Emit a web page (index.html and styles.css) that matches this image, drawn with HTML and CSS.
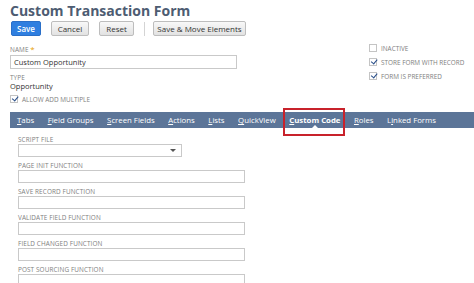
FILE: index.html
```html
<!DOCTYPE html>
<html>
<head>
<meta charset="utf-8">
<link rel="stylesheet" href="styles.css">
</head>
<body>
<div class="page">
  <h1 class="title">Custom Transaction Form</h1>
  <div class="toolbar">
    <button class="btn primary">Save</button>
    <button class="btn">Cancel</button>
    <button class="btn">Reset</button>
    <span class="sep"></span>
    <button class="btn">Save &amp; Move Elements</button>
  </div>
  <div class="top">
    <div class="left">
      <div class="label">NAME <span class="req">*</span></div>
      <div class="input wide">Custom Opportunity</div>
      <div class="label type">TYPE</div>
      <div class="value">Opportunity</div>
      <div class="check-row"><span class="cb checked"></span><span class="cl">ALLOW ADD MULTIPLE</span></div>
    </div>
    <div class="right">
      <div class="check-row"><span class="cb"></span><span class="cl">INACTIVE</span></div>
      <div class="check-row"><span class="cb checked"></span><span class="cl">STORE FORM WITH RECORD</span></div>
      <div class="check-row"><span class="cb checked"></span><span class="cl">FORM IS PREFERRED</span></div>
    </div>
  </div>
  <div class="tabs">
    <span class="tab"><u>T</u>abs</span>
    <span class="tab"><u>F</u>ield Groups</span>
    <span class="tab"><u>S</u>creen Fields</span>
    <span class="tab"><u>A</u>ctions</span>
    <span class="tab"><u>L</u>ists</span>
    <span class="tab"><u>Q</u>uickView</span>
    <span class="tab active"><u>C</u>ustom Code</span>
    <span class="tab"><u>R</u>oles</span>
    <span class="tab">L<u>i</u>nked Forms</span>
  </div>
  <div class="content">
    <div class="label">SCRIPT FILE</div>
    <div class="input select"><span class="arrow"></span></div>
    <div class="label">PAGE INIT FUNCTION</div>
    <div class="input field"></div>
    <div class="label">SAVE RECORD FUNCTION</div>
    <div class="input field"></div>
    <div class="label">VALIDATE FIELD FUNCTION</div>
    <div class="input field"></div>
    <div class="label">FIELD CHANGED FUNCTION</div>
    <div class="input field"></div>
    <div class="label">POST SOURCING FUNCTION</div>
    <div class="input field"></div>
  </div>
</div>
</body>
</html>
```
FILE: styles.css
```css
html, body {
  margin: 0;
  padding: 0;
  background: #fff;
  overflow: hidden;
}
body {
  font-family: "Open Sans", "Liberation Sans", sans-serif;
  color: #333;
  width: 474px;
  height: 283px;
}
.page {
  padding: 2px 0 0 10px;
}
.title {
  margin: 0;
  font-size: 14px;
  font-weight: 700;
  color: #4d5c72;
  line-height: 17px;
  height: 18px;
}
.toolbar {
  display: flex;
  align-items: center;
  margin-top: 1px;
  margin-left: 1px;
  height: 15px;
}
.btn {
  height: 15px;
  font-family: "Open Sans", "Liberation Sans", sans-serif;
  font-size: 8px;
  line-height: 13px;
  padding: 0;
  border: 1px solid #bdbdbd;
  background: linear-gradient(#f8f8f8, #e2e2e2);
  color: #333;
  border-radius: 2px;
  margin-right: 10px;
}
.btn.primary {
  background: #2f7fe0;
  border-color: #2a6fc8;
  color: #fff;
  font-weight: 600;
  width: 30px;
}
.btn:nth-child(2) { width: 38px; }
.btn:nth-child(3) { width: 35px; }
.btn:nth-child(5) { width: 93px; }
.sep {
  width: 1px;
  height: 14px;
  background: #d4d4d4;
  margin-right: 8px;
}
.top {
  display: flex;
  margin-top: 9px;
  height: 67px;
}
.left {
  width: 227px;
}
.right {
  margin-left: 132px;
  margin-top: -4px;
}
.label {
  font-size: 6.4px;
  color: #808080;
  line-height: 8px;
  letter-spacing: 0.1px;
}
.req {
  color: #e8a000;
  font-size: 8px;
}
.input {
  border: 1px solid #c9c9c9;
  background: #fff;
  box-sizing: border-box;
  height: 14px;
  font-size: 7.5px;
  line-height: 12px;
  padding-left: 3px;
  color: #333;
  margin-top: 1px;
}
.wide {
  width: 227px;
}
.type {
  margin-top: 5px;
}
.value {
  font-size: 7.5px;
  line-height: 9px;
  color: #333;
}
.check-row {
  display: flex;
  align-items: center;
  height: 14px;
}
.left .check-row {
  margin-top: 1px;
}
.cb {
  width: 8px;
  height: 8px;
  border: 1px solid #c4c4c4;
  box-sizing: border-box;
  margin-right: 4px;
  position: relative;
  background: #fff;
}
.cb.checked::after {
  content: "";
  position: absolute;
  left: 1px;
  top: 0px;
  width: 5px;
  height: 2.5px;
  border-left: 1.6px solid #2a4f8a;
  border-bottom: 1.6px solid #2a4f8a;
  transform: rotate(-50deg);
}
.cl {
  font-size: 6.4px;
  color: #808080;
}
.tabs {
  display: flex;
  align-items: center;
  background: #5c7598;
  height: 16px;
  padding-left: 7px;
}
.tab {
  color: #fff;
  font-size: 7.8px;
  margin-right: 13.5px;
  position: relative;
  white-space: nowrap;
  line-height: 16px;
}
.tab.active {
  font-weight: 700;
}
.tab.active::before {
  content: "";
  position: absolute;
  left: -6px;
  right: -5px;
  top: -4px;
  bottom: -8px;
  border: 2px solid #c8222b;
}
.tab.active::after {
  content: "";
  position: absolute;
  left: 50%;
  bottom: 0;
  margin-left: -3px;
  border-left: 3px solid transparent;
  border-right: 3px solid transparent;
  border-bottom: 3px solid #fff;
}
.content {
  padding-left: 8px;
  padding-top: 8px;
}
.content .label {
  line-height: 8px;
}
.content .input {
  height: 13px;
  margin-top: 0;
  margin-bottom: 5px;
}
.field {
  width: 227px;
}
.select {
  width: 164px;
  position: relative;
}
.arrow {
  position: absolute;
  right: 5px;
  top: 4px;
  border-left: 3px solid transparent;
  border-right: 3px solid transparent;
  border-top: 3px solid #555;
}
```
